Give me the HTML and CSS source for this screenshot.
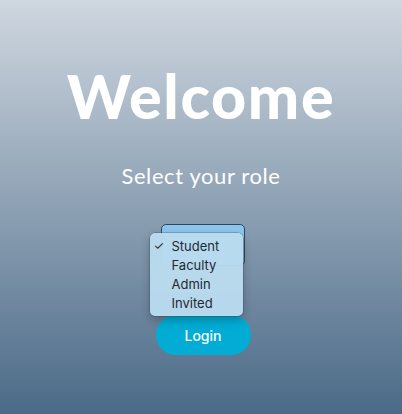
FILE: index.html
```html
<!DOCTYPE html>
<html>
<head>
<meta charset="utf-8">
<link rel="stylesheet" href="styles.css">
</head>
<body>
<main class="page">
  <h1 class="title">Welcome</h1>
  <p class="subtitle">Select your role</p>
  <div class="picker">
    <div class="select-box"></div>
    <ul class="menu">
      <li class="item checked"><span class="check">✓</span>Student</li>
      <li class="item"><span class="check"></span>Faculty</li>
      <li class="item"><span class="check"></span>Admin</li>
      <li class="item"><span class="check"></span>Invited</li>
    </ul>
  </div>
  <button class="login">Login</button>
</main>
</body>
</html>
```
FILE: styles.css
```css
html, body {
  margin: 0;
  padding: 0;
  height: 100%;
}
body {
  background: linear-gradient(to bottom, #cfd7e0 0%, #4b6a87 100%);
  font-family: "Lato", "Open Sans", sans-serif;
  color: #fff;
}
.page {
  display: flex;
  flex-direction: column;
  align-items: center;
  padding-top: 62px;
}
.title {
  margin: 0;
  font-family: "Lato", sans-serif;
  font-weight: 900;
  font-size: 61px;
  line-height: 68px;
  letter-spacing: 1.6px;
}
.subtitle {
  margin: 33px 0 0;
  font-weight: 400;
  font-size: 22px;
  line-height: 26px;
  letter-spacing: 0.6px;
}
.picker {
  position: relative;
  margin-top: 35px;
  width: 84px;
  height: 42px;
  margin-left: 3px;
}
.select-box {
  width: 82px;
  height: 40px;
  border: 1px solid #34475a;
  border-radius: 5px;
  background: #8cc6ee;
}
.menu {
  position: absolute;
  left: -11px;
  top: 9px;
  width: 93px;
  margin: 0;
  padding: 3px 0 4px;
  list-style: none;
  background: rgba(186, 219, 238, 0.97);
  border-radius: 5px;
  box-shadow: 0 0 0 0.5px rgba(40, 60, 80, 0.5), 0 4px 10px rgba(0, 0, 0, 0.25);
  font-family: "Inter", "Open Sans", sans-serif;
  font-size: 13px;
  color: #1f2a33;
  z-index: 2;
}
.item {
  display: flex;
  align-items: center;
  height: 19px;
  padding-left: 4px;
}
.check {
  width: 18px;
  font-size: 12px;
}
.login {
  margin-top: 49px;
  margin-left: 4px;
  width: 95px;
  height: 40px;
  border: none;
  border-radius: 20px;
  background: #02acd4;
  color: #fff;
  font-family: "Inter", sans-serif;
  font-weight: 500;
  font-size: 14px;
}
```
